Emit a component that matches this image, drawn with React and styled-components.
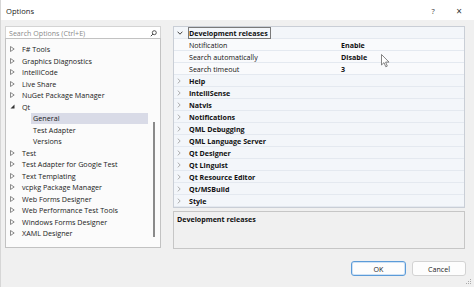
import React from 'react';
import styled, { createGlobalStyle } from 'styled-components';

const GlobalStyle = createGlobalStyle`
  html, body {
    margin: 0;
    padding: 0;
    background: #f0f0f0;
  }
  body {
    font-family: 'Open Sans', 'Noto Sans', sans-serif;
    color: #111;
  }
`;

const Window = styled.div`
  position: relative;
  width: 474px;
  height: 287px;
  display: flex;
  flex-direction: column;
  background: #f0f0f0;
  overflow: hidden;
  box-sizing: border-box;
  border-left: 1px solid #d6d6d6;
`;

const TitleBar = styled.div`
  height: 20px;
  box-sizing: border-box;
  padding: 1px 2px 0 5px;
  display: flex;
  align-items: center;
  background: #ffffff;
  font-size: 7.6px;
  color: #222;
`;

const Title = styled.span`
  flex: 1;
`;

const TitleButton = styled.span`
  width: 26px;
  text-align: center;
  font-size: ${(p) => p.$size || 8}px;
  color: #333;
`;

const Body = styled.div`
  display: flex;
  gap: 12px;
  padding: 6px 9px 0 4px;
`;

const LeftColumn = styled.div`
  width: 156px;
  display: flex;
  flex-direction: column;
`;

const SearchBox = styled.div`
  height: 12px;
  box-sizing: border-box;
  display: flex;
  align-items: center;
  background: #fff;
  border: 1px solid #d4d4d4;
  border-bottom: none;
  padding: 1px 3px 0 3px;
  font-size: 7.1px;
  color: #8a8a8a;

  span {
    flex: 1;
  }
`;

const Tree = styled.div`
  height: 210px;
  box-sizing: border-box;
  position: relative;
  background: #fbfbfb;
  border: 1px solid #c2c2c2;
  padding-top: 4.5px;
`;

const TreeRow = styled.div`
  height: 11.5px;
  display: flex;
  align-items: center;
  margin-right: 12px;
  margin-left: ${(p) => (p.$level ? 25 : 0)}px;
  padding-left: ${(p) => (p.$level ? 2 : 4)}px;
  background: ${(p) => (p.$selected ? '#d9dbe7' : 'transparent')};
  font-size: 7.2px;
  color: #1a1a1a;
  white-space: nowrap;
`;

const Expander = styled.span`
  width: 5px;
  margin-right: 7px;
  display: flex;
  align-items: center;
`;

const ScrollThumb = styled.div`
  position: absolute;
  right: 5px;
  top: 83px;
  width: 2px;
  height: 115px;
  background: #8a8a8a;
`;

const RightColumn = styled.div`
  flex: 1;
  display: flex;
  flex-direction: column;
  gap: 3px;
`;

const Grid = styled.div`
  height: 182px;
  box-sizing: border-box;
  background: #f6f8fb;
  border: 1px solid #c9ced6;
`;

const GridRow = styled.div`
  height: 12px;
  box-sizing: border-box;
  padding-top: 1.5px;
  display: flex;
  align-items: center;
  font-size: 7.1px;
  font-weight: ${(p) => (p.$category ? 700 : 400)};
  color: #111;
  background: ${(p) => (p.$category ? '#f3f6fa' : '#f9fafc')};
  border-bottom: 1px solid #e4e9f0;
`;

const Chevron = styled.span`
  width: 11px;
  flex: none;
  display: flex;
  padding-left: 3px;
`;

const Label = styled.span`
  width: 153px;
  flex: none;
  white-space: nowrap;
  span {
    border: 1px solid ${(p) => (p.$focus ? '#7a7a7a' : 'transparent')};
    padding: 0 2px 0 0;
  }
`;

const Value = styled.span`
  font-weight: 700;
  white-space: nowrap;
`;

const Description = styled.div`
  height: 38px;
  box-sizing: border-box;
  border: 1px solid #c6c6c6;
  padding: 2px 3px;
  font-size: 7.1px;
  font-weight: 700;
  color: #111;
`;

const Footer = styled.div`
  display: flex;
  justify-content: flex-end;
  gap: 6px;
  padding: 12px 8px 0 0;
`;

const Button = styled.button`
  width: ${(p) => p.$width}px;
  height: 15px;
  padding: 0;
  border-radius: 3px;
  background: #fdfdfd;
  border: 1px solid ${(p) => (p.$primary ? '#5b9bd8' : '#d3d3d3')};
  box-shadow: ${(p) => (p.$primary ? 'inset 0 0 0 1px #cfe2f5' : 'none')};
  font-family: 'Open Sans', 'Noto Sans', sans-serif;
  font-size: 7.1px;
  color: #1b1b1b;
`;

const Cursor = styled.svg`
  position: absolute;
  left: 380px;
  top: 54px;
`;

const Grip = styled.svg`
  position: absolute;
  right: 2px;
  bottom: 2px;
`;

const ClosedArrow = () => (
  <svg width="5" height="6" viewBox="0 0 5 6">
    <path d="M0.5 0.5 L4.2 3 L0.5 5.5 Z" fill="none" stroke="#6e6e6e" strokeWidth="0.8" />
  </svg>
);

const OpenArrow = () => (
  <svg width="5" height="5" viewBox="0 0 5 5">
    <path d="M4.5 0.5 L4.5 4.5 L0.5 4.5 Z" fill="#333" />
  </svg>
);

const ChevronRight = () => (
  <svg width="4" height="6" viewBox="0 0 4 6">
    <path d="M0.7 0.6 L3.2 3 L0.7 5.4" fill="none" stroke="#9a9a9a" strokeWidth="0.8" />
  </svg>
);

const ChevronDown = () => (
  <svg width="6" height="4" viewBox="0 0 6 4">
    <path d="M0.6 0.7 L3 3.2 L5.4 0.7" fill="none" stroke="#333" strokeWidth="0.9" />
  </svg>
);

const Magnifier = () => (
  <svg width="7" height="7" viewBox="0 0 7 7">
    <circle cx="4.3" cy="2.7" r="2" fill="none" stroke="#444" strokeWidth="0.9" />
    <path d="M2.9 4.1 L0.8 6.2" stroke="#444" strokeWidth="1" />
  </svg>
);

const treeItems = [
  { label: 'F# Tools' },
  { label: 'Graphics Diagnostics' },
  { label: 'IntelliCode' },
  { label: 'Live Share' },
  { label: 'NuGet Package Manager' },
  { label: 'Qt', open: true },
  { label: 'General', child: true, selected: true },
  { label: 'Test Adapter', child: true },
  { label: 'Versions', child: true },
  { label: 'Test' },
  { label: 'Test Adapter for Google Test' },
  { label: 'Text Templating' },
  { label: 'vcpkg Package Manager' },
  { label: 'Web Forms Designer' },
  { label: 'Web Performance Test Tools' },
  { label: 'Windows Forms Designer' },
  { label: 'XAML Designer' }
];

const gridRows = [
  { label: 'Development releases', category: true, open: true },
  { label: 'Notification', value: 'Enable' },
  { label: 'Search automatically', value: 'Disable' },
  { label: 'Search timeout', value: '3' },
  { label: 'Help', category: true },
  { label: 'IntelliSense', category: true },
  { label: 'Natvis', category: true },
  { label: 'Notifications', category: true },
  { label: 'QML Debugging', category: true },
  { label: 'QML Language Server', category: true },
  { label: 'Qt Designer', category: true },
  { label: 'Qt Linguist', category: true },
  { label: 'Qt Resource Editor', category: true },
  { label: 'Qt/MSBuild', category: true },
  { label: 'Style', category: true }
];

const App = () => (
  <>
    <GlobalStyle />
    <Window>
      <TitleBar>
        <Title>Options</Title>
        <TitleButton $size={7.5}>?</TitleButton>
        <TitleButton $size={10}>×</TitleButton>
      </TitleBar>
      <Body>
        <LeftColumn>
          <SearchBox>
            <span>Search Options (Ctrl+E)</span>
            <Magnifier />
          </SearchBox>
          <Tree>
            {treeItems.map((item) => (
              <TreeRow key={item.label} $level={item.child} $selected={item.selected}>
                {!item.child && <Expander>{item.open ? <OpenArrow /> : <ClosedArrow />}</Expander>}
                <span>{item.label}</span>
              </TreeRow>
            ))}
            <ScrollThumb />
          </Tree>
        </LeftColumn>
        <RightColumn>
          <Grid>
            {gridRows.map((row) => (
              <GridRow key={row.label} $category={row.category}>
                <Chevron>
                  {row.category && (row.open ? <ChevronDown /> : <ChevronRight />)}
                </Chevron>
                <Label $focus={row.open}>
                  <span>{row.label}</span>
                </Label>
                {row.value && <Value>{row.value}</Value>}
              </GridRow>
            ))}
          </Grid>
          <Description>Development releases</Description>
        </RightColumn>
      </Body>
      <Footer>
        <Button $primary $width={55}>
          OK
        </Button>
        <Button $width={54}>Cancel</Button>
      </Footer>
      <Cursor width="9" height="14" viewBox="0 0 9 14">
        <path
          d="M0.5 0.5 L0.5 11 L3 8.6 L4.8 12.8 L6.3 12.1 L4.6 8.1 L8 8.1 Z"
          fill="#fff"
          stroke="#666"
          strokeWidth="0.8"
        />
      </Cursor>
      <Grip width="6" height="6" viewBox="0 0 6 6">
        <rect x="4" y="4" width="1" height="1" fill="#aaa" />
        <rect x="2" y="4" width="1" height="1" fill="#aaa" />
        <rect x="4" y="2" width="1" height="1" fill="#aaa" />
        <rect x="0" y="4" width="1" height="1" fill="#aaa" />
        <rect x="2" y="2" width="1" height="1" fill="#aaa" />
        <rect x="4" y="0" width="1" height="1" fill="#aaa" />
      </Grip>
    </Window>
  </>
);

export default App;
